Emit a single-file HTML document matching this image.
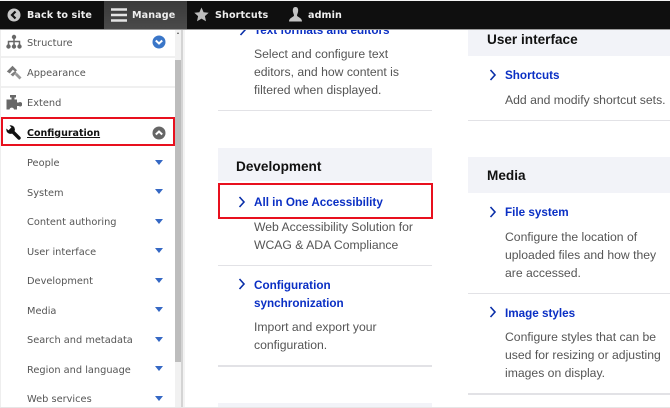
<!DOCTYPE html>
<html><head><meta charset="utf-8"><style>
html,body{margin:0;padding:0}
body{width:670px;height:408px;position:relative;overflow:hidden;background:#fff}
div,a,svg{position:absolute}
.t{white-space:nowrap}
.tb{font:bold 9.6px "DejaVu Sans",sans-serif;color:#eee;top:9px;line-height:14px;letter-spacing:.1px}
.m{font:9.8px "DejaVu Sans",sans-serif;color:#555;left:27px;line-height:14px;white-space:nowrap}
.h{font:bold 13.6px "Liberation Sans",sans-serif;color:#111;white-space:nowrap;line-height:18px}
.l{font:bold 11.7px "Liberation Sans",sans-serif;color:#0a2fc4;white-space:nowrap;line-height:18px}
.d{font:12.2px/18px "Liberation Sans",sans-serif;color:#555;white-space:nowrap}
.hb{background:#f2f3f8}
.s{background:#e2e2e6;height:1px}
.a{left:155px;width:0;height:0;border-left:4px solid transparent;border-right:4px solid transparent;border-top:5px solid #3568c4}
</style></head><body>

<!-- content -->
<svg style="left:239px;top:24px" width="8" height="12" viewBox="0 0 8 12"><path d="M1.500 1L6 6L1.500 11" fill="none" stroke="#0a2fa8" stroke-width="1.600"/></svg>
<div class="l" style="left:254px;top:22px">Text formats and editors</div>
<div class="d" style="left:254px;top:45px">Select and configure text<br>editors, and how content is<br>filtered when displayed.</div>
<div class="s" style="left:218px;top:110px;width:214px"></div>

<div class="hb" style="left:218px;top:148px;width:214px;height:33px"></div>
<div class="h" style="left:236px;top:158px">Development</div>
<div style="left:218px;top:183px;width:211px;height:32px;border:2px solid #e8101e"></div>
<svg style="left:238px;top:196px" width="8" height="12" viewBox="0 0 8 12"><path d="M1.500 1L6 6L1.500 11" fill="none" stroke="#0a2fa8" stroke-width="1.600"/></svg>
<div class="l" style="left:254px;top:194px">All in One Accessibility</div>
<div class="d" style="left:254px;top:218px">Web Accessibility Solution for<br>WCAG &amp; ADA Compliance</div>
<div class="s" style="left:218px;top:265px;width:214px"></div>
<svg style="left:238px;top:278px" width="8" height="12" viewBox="0 0 8 12"><path d="M1.500 1L6 6L1.500 11" fill="none" stroke="#0a2fa8" stroke-width="1.600"/></svg>
<div class="l" style="left:254px;top:277px">Configuration</div>
<div class="l" style="left:254px;top:295px">synchronization</div>
<div class="d" style="left:254px;top:318px">Import and export your<br>configuration.</div>
<div class="s" style="left:218px;top:365px;width:214px;height:2px"></div>
<div class="hb" style="left:218px;top:403px;width:214px;height:5px"></div>

<div class="hb" style="left:468px;top:28px;width:202px;height:28px"></div>
<div class="h" style="left:487px;top:31px">User interface</div>
<svg style="left:489px;top:69px" width="8" height="12" viewBox="0 0 8 12"><path d="M1.500 1L6 6L1.500 11" fill="none" stroke="#0a2fa8" stroke-width="1.600"/></svg>
<div class="l" style="left:505px;top:67px">Shortcuts</div>
<div class="d" style="left:505px;top:91px">Add and modify shortcut sets.</div>
<div class="s" style="left:468px;top:120px;width:202px"></div>

<div class="hb" style="left:468px;top:157px;width:202px;height:36px"></div>
<div class="h" style="left:487px;top:167px">Media</div>
<svg style="left:489px;top:206px" width="8" height="12" viewBox="0 0 8 12"><path d="M1.500 1L6 6L1.500 11" fill="none" stroke="#0a2fa8" stroke-width="1.600"/></svg>
<div class="l" style="left:505px;top:204px">File system</div>
<div class="d" style="left:505px;top:228px">Configure the location of<br>uploaded files and how they<br>are accessed.</div>
<div class="s" style="left:468px;top:293px;width:202px"></div>
<svg style="left:489px;top:306px" width="8" height="12" viewBox="0 0 8 12"><path d="M1.500 1L6 6L1.500 11" fill="none" stroke="#0a2fa8" stroke-width="1.600"/></svg>
<div class="l" style="left:505px;top:305px">Image styles</div>
<div class="d" style="left:505px;top:328px">Configure styles that can be<br>used for resizing or adjusting<br>images on display.</div>
<div class="s" style="left:468px;top:393px;width:202px;height:2px"></div>

<!-- sidebar -->
<div style="left:0;top:30px;width:181px;height:378px;background:#fff"></div>
<div style="left:181px;top:30px;width:2px;height:378px;background:#d4d4d4"></div>
<div style="left:183px;top:30px;width:2px;height:378px;background:#f3f3f3"></div>
<div style="left:0;top:30px;width:1px;height:378px;background:#eee"></div>
<div style="left:175px;top:30px;width:6px;height:378px;background:#f1f1f1"></div>
<div style="left:175px;top:60px;width:6px;height:302px;background:#bdbdbd"></div>
<div style="left:176.500px;top:32px;width:0;height:0;border-left:1.500px solid transparent;border-right:1.500px solid transparent;border-bottom:2px solid #555"></div>
<div style="left:1px;top:56px;width:174px;height:2px;background:#f0f0f0"></div>
<div style="left:1px;top:86px;width:174px;height:2px;background:#f0f0f0"></div>

<svg style="left:6px;top:34px" width="16" height="16" viewBox="0 0 16 16"><g fill="#686868"><circle cx="8" cy="3" r="2.200"/><circle cx="2.500" cy="12.500" r="2.200"/><circle cx="8" cy="12.500" r="2.200"/><circle cx="13.500" cy="12.500" r="2.200"/></g><path d="M8 3V12M2.500 12V7.500H13.500V12" fill="none" stroke="#686868" stroke-width="1.500"/></svg>
<div class="m" style="top:37px">Structure</div>
<svg style="left:152px;top:35px" width="14" height="14" viewBox="0 0 14 14"><circle cx="7" cy="7" r="6.500" fill="#3a76c8"/><path d="M3.800 5.500L7 8.500L10.200 5.500" fill="none" stroke="#fff" stroke-width="2"/></svg>

<svg style="left:6px;top:65px" width="16" height="16" viewBox="0 0 16 16"><path d="M.8 6.500L6.500 .8L11 5.300L9.500 6.800L6.800 4.800L3.800 8.500Z" fill="#777"/><path d="M4.500 9.500L9 6L10.500 7.500L7 11.500Z" fill="#808080"/><path d="M9.800 8.800L14.500 13.500" stroke="#999" stroke-width="2.800"/></svg>
<div class="m" style="top:67px">Appearance</div>

<svg style="left:6px;top:95px" width="16" height="16" viewBox="0 0 16 16"><path d="M4 0H10V2.500H8.500V4.500H11V7.500H12.800A2.200 2.200 0 1 1 12.800 11H11V14.500H8A2.300 2.300 0 0 0 3.500 14.500H.5V4.500H5.500V2.500H4Z" fill="#686868"/></svg>
<div class="m" style="top:97px">Extend</div>

<div style="left:1px;top:117px;width:170px;height:25px;border:2px solid #e8101e;background:#fff"></div>
<svg style="left:6px;top:125px" width="15" height="15" viewBox="0 0 15 15"><circle cx="4.600" cy="4.600" r="4.300" fill="#111"/><path d="M5.500 5.500L13 13" stroke="#111" stroke-width="3.400" stroke-linecap="round"/><path d="M0 3L3 0L5.400 2.400L2.400 5.400Z" fill="#fff"/></svg>
<div class="m" style="top:127px;color:#111;font-weight:bold;font-size:9.500px;text-decoration:underline">Configuration</div>
<svg style="left:152px;top:126px" width="14" height="14" viewBox="0 0 14 14"><circle cx="7" cy="7" r="6.500" fill="#666"/><path d="M3.800 8.500L7 5.500L10.200 8.500" fill="none" stroke="#fff" stroke-width="2"/></svg>

<div class="m" style="top:157px">People</div><div class="a" style="top:160px"></div>
<div class="m" style="top:187px">System</div><div class="a" style="top:189px"></div>
<div class="m" style="top:216px">Content authoring</div><div class="a" style="top:219px"></div>
<div class="m" style="top:246px">User interface</div><div class="a" style="top:248px"></div>
<div class="m" style="top:275px">Development</div><div class="a" style="top:278px"></div>
<div class="m" style="top:305px">Media</div><div class="a" style="top:307px"></div>
<div class="m" style="top:334px">Search and metadata</div><div class="a" style="top:337px"></div>
<div class="m" style="top:364px">Region and language</div><div class="a" style="top:366px"></div>
<div class="m" style="top:393px">Web services</div><div class="a" style="top:396px"></div>
<div style="left:0;top:407px;width:670px;height:1px;background:#e6e6e6"></div>

<!-- toolbar -->
<div style="left:0;top:0;width:670px;height:29px;background:#0f0f0f"></div>
<div style="left:0;top:0;width:670px;height:1px;background:#f4f4f4"></div>
<div style="left:0;top:29px;width:670px;height:1px;background:#9a9a9a"></div>
<div style="left:104px;top:1px;width:83px;height:28px;background:linear-gradient(#3a3a3a,#4a4a4a)"></div>
<svg style="left:7px;top:8px" width="14" height="14" viewBox="0 0 14 14"><circle cx="7" cy="7" r="6.500" fill="#c8c8c8"/><path d="M8.500 3.500L5 7L8.500 10.500" fill="none" stroke="#111" stroke-width="2.200"/></svg>
<div class="tb t" style="left:27px">Back to site</div>
<svg style="left:111px;top:7px" width="16" height="16" viewBox="0 0 16 16"><path d="M0 2.500H16M0 8H16M0 13.500H16" stroke="#e4e4e4" stroke-width="2.400"/></svg>
<div class="tb t" style="left:132px">Manage</div>
<svg style="left:194px;top:7px" width="15" height="15" viewBox="0 0 15 15"><path d="M7.500 .5L9.600 5.200L14.700 5.700L10.900 9.100L12 14.200L7.500 11.600L3 14.200L4.100 9.100L.3 5.700L5.400 5.200Z" fill="#bdbdbd"/></svg>
<div class="tb t" style="left:215px">Shortcuts</div>
<svg style="left:288px;top:7px" width="15" height="15" viewBox="0 0 15 15"><path d="M7.500 0C10 0 10.500 2.500 10 5C9.700 6.500 9 7.500 9 8.500C9 10 14 10.500 14 14.500H1C1 10.500 6 10 6 8.500C6 7.500 5.300 6.500 5 5C4.500 2.500 5 0 7.500 0Z" fill="#c4c4c4"/></svg>
<div class="tb t" style="left:308px">admin</div>
</body></html>
